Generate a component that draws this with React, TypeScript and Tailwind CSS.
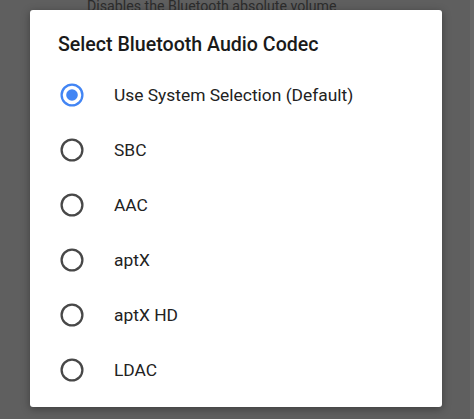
import React from "react";

const options = [
  "Use System Selection (Default)",
  "SBC",
  "AAC",
  "aptX",
  "aptX HD",
  "LDAC",
];

function Radio({ checked }: { checked: boolean }) {
  return (
    <svg width="26" height="26" viewBox="0 0 26 26" className="shrink-0">
      <circle
        cx="13"
        cy="13"
        r="10.4"
        fill="none"
        stroke={checked ? "#4285f4" : "#484848"}
        strokeWidth="2.3"
      />
      {checked && <circle cx="13" cy="13" r="5.8" fill="#4285f4" />}
    </svg>
  );
}

export default function App() {
  return (
    <div
      className="w-[474px] h-[419px] bg-[#5f5f5f] overflow-hidden relative"
      style={{ fontFamily: "Roboto, 'Liberation Sans', sans-serif" }}
    >
      <div className="h-[10px] overflow-hidden flex items-end pl-[87px]">
        <div className="text-[14.2px] leading-[18px] text-[#2b2b2b] mb-[-5px] whitespace-nowrap">
          Disables the Bluetooth absolute volume
        </div>
      </div>
      <div className="ml-[30px] w-[412px] h-[397px] bg-white rounded-[3px] shadow-[0_2px_8px_rgba(0,0,0,0.35)] flex flex-col">
        <div className="pt-[22px] pl-[28px] text-[19.6px] leading-[25px] font-medium text-[#1a1a1a]">
          Select Bluetooth Audio Codec
        </div>
        <div className="mt-[10px] flex flex-col">
          {options.map((o, i) => (
            <div key={o} className="h-[55px] flex items-center pl-[29px]">
              <Radio checked={i === 0} />
              <span className="ml-[29px] text-[17.4px] text-[#222222] leading-[24px]">
                {o}
              </span>
            </div>
          ))}
        </div>
      </div>
      <div className="absolute right-0 top-0 w-[4px] h-full bg-[#6a6a6a]" />
    </div>
  );
}
